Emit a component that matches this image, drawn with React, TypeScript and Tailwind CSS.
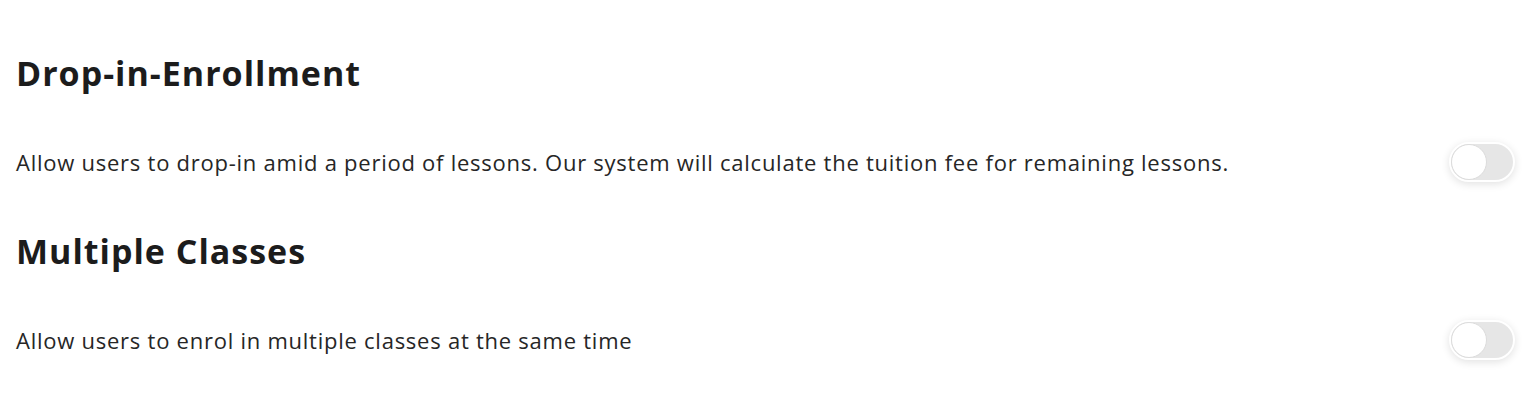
import React from 'react';

const settings = [
  {
    title: 'Drop-in-Enrollment',
    description:
      'Allow users to drop-in amid a period of lessons. Our system will calculate the tuition fee for remaining lessons.',
  },
  {
    title: 'Multiple Classes',
    description: 'Allow users to enrol in multiple classes at the same time',
  },
];

const Toggle: React.FC = () => (
  <div className="w-[66px] h-[40px] rounded-full bg-[#e6e6e6] border-2 border-white shadow-[0_2px_8px_rgba(0,0,0,0.12)] flex items-center shrink-0">
    <div className="w-[36px] h-[36px] rounded-full bg-white border border-[#dcdcdc]" />
  </div>
);

const App: React.FC = () => {
  return (
    <div
      className="w-[1537px] h-[407px] bg-white pl-4 pr-[22px] pt-[54px] flex flex-col gap-[50px]"
      style={{ fontFamily: '"Open Sans", "Noto Sans", sans-serif' }}
    >
      {settings.map((item, index) => (
        <section key={index} className="flex flex-col">
          <h2 className="text-[34px] leading-[38px] font-bold tracking-[1px] text-[#1c1c1c] mb-[50px]">
            {item.title}
          </h2>
          <div className="flex items-center justify-between h-10">
            <p className="text-[22px] leading-7 tracking-[0.75px] text-[#262626]">{item.description}</p>
            <Toggle />
          </div>
        </section>
      ))}
    </div>
  );
};

export default App;
